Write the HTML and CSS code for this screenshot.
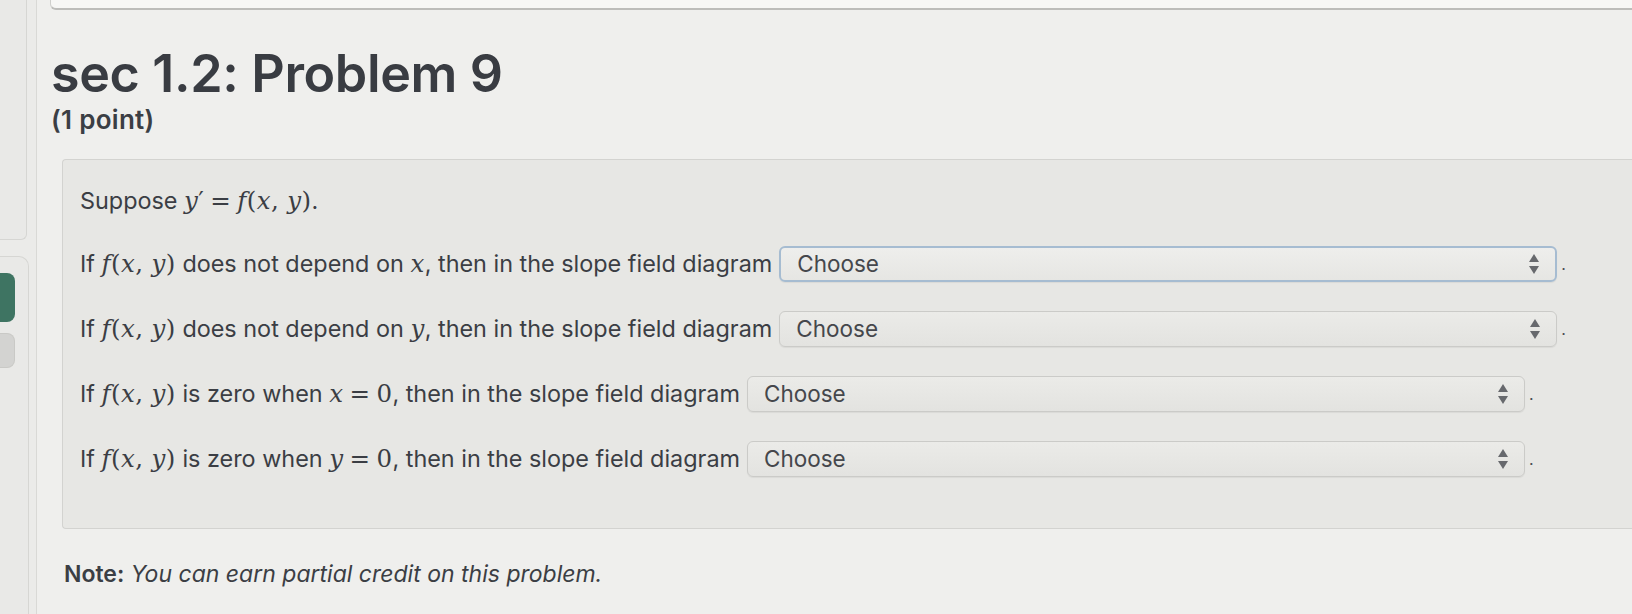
FILE: index.html
```html
<!DOCTYPE html>
<html lang="en">
<head>
<meta charset="utf-8">
<title>sec 1.2: Problem 9</title>
<link rel="stylesheet" href="styles.css">
</head>
<body>
<div class="page">
  <aside class="sidebar">
    <div class="side-panel side-top"></div>
    <div class="side-panel side-lower">
      <div class="side-btn side-green"></div>
      <div class="side-btn side-gray"></div>
    </div>
  </aside>
  <main class="main">
    <div class="top-card"></div>
    <h1 class="title">sec 1.2: Problem 9</h1>
    <div class="points">(1 point)</div>
    <section class="problem">
      <p class="line intro">Suppose <span class="math"><i>y</i>′<span class="op">=</span><i>f</i>(<i>x</i>, <i>y</i>)</span>.</p>
      <div class="row">
        <span class="q">If <span class="math"><i>f</i>(<i>x</i>, <i>y</i>)</span> does not depend on <span class="math"><i>x</i></span>, then in the slope field diagram</span>
        <div class="select focused"><span class="sel-text">Choose</span><svg class="arrows" width="12" height="22" viewBox="0 0 12 22"><path d="M6 1 L11 9 L1 9 Z"/><path d="M1 13 L11 13 L6 21 Z"/></svg></div><span class="dot">.</span>
      </div>
      <div class="row">
        <span class="q">If <span class="math"><i>f</i>(<i>x</i>, <i>y</i>)</span> does not depend on <span class="math"><i>y</i></span>, then in the slope field diagram</span>
        <div class="select"><span class="sel-text">Choose</span><svg class="arrows" width="12" height="22" viewBox="0 0 12 22"><path d="M6 1 L11 9 L1 9 Z"/><path d="M1 13 L11 13 L6 21 Z"/></svg></div><span class="dot">.</span>
      </div>
      <div class="row">
        <span class="q">If <span class="math"><i>f</i>(<i>x</i>, <i>y</i>)</span> is zero when <span class="math"><i>x</i><span class="op">=</span>0</span>, then in the slope field diagram</span>
        <div class="select"><span class="sel-text">Choose</span><svg class="arrows" width="12" height="22" viewBox="0 0 12 22"><path d="M6 1 L11 9 L1 9 Z"/><path d="M1 13 L11 13 L6 21 Z"/></svg></div><span class="dot">.</span>
      </div>
      <div class="row">
        <span class="q">If <span class="math"><i>f</i>(<i>x</i>, <i>y</i>)</span> is zero when <span class="math"><i>y</i><span class="op">=</span>0</span>, then in the slope field diagram</span>
        <div class="select"><span class="sel-text">Choose</span><svg class="arrows" width="12" height="22" viewBox="0 0 12 22"><path d="M6 1 L11 9 L1 9 Z"/><path d="M1 13 L11 13 L6 21 Z"/></svg></div><span class="dot">.</span>
      </div>
    </section>
    <p class="note"><b>Note:</b> <i>You can earn partial credit on this problem.</i></p>
  </main>
</div>
</body>
</html>
```

FILE: styles.css
```css
* { box-sizing: border-box; }

html, body {
  margin: 0;
  padding: 0;
  height: 100%;
  overflow: hidden;
  background: #efefed;
}

body {
  font-family: Inter, "Liberation Sans", Arial, sans-serif;
  color: #3b3e44;
}

.page {
  display: flex;
  height: 614px;
}

.sidebar {
  width: 37px;
  flex: none;
  background: #ebebe9;
  border-right: 1px solid #d9d9d6;
  display: flex;
  flex-direction: column;
}

.side-panel {
  background: #e9e9e7;
  border: 1px solid #d6d6d3;
  border-left: none;
}

.side-top {
  width: 27px;
  height: 240px;
  border-top: none;
  border-bottom-right-radius: 6px;
}

.side-lower {
  width: 29px;
  margin-top: 16px;
  flex: 1;
  border-bottom: none;
  border-top-right-radius: 10px;
  padding-top: 16px;
  display: flex;
  flex-direction: column;
  gap: 11px;
}

.side-btn {
  width: 15px;
  border-radius: 0 8px 8px 0;
}

.side-green {
  height: 49px;
  background: #3e7462;
}

.side-gray {
  height: 35px;
  background: #d3d3d1;
  border: 1px solid #c9c9c6;
  border-left: none;
}

.main {
  flex: 1;
  padding-left: 13px;
  display: flex;
  flex-direction: column;
  min-width: 0;
}

.top-card {
  height: 10px;
  background: #f7f7f5;
  border: 1px solid #cfcfcc;
  border-top: none;
  border-right: none;
  border-bottom: 2px solid #bdbdba;
  border-bottom-left-radius: 6px;
  flex: none;
}

.title {
  margin: 34px 0 0 1px;
  font-size: 52px;
  line-height: 60px;
  font-weight: 600;
  color: #393c42;
  letter-spacing: -0.35px;
}

.points {
  margin-top: 1px;
  margin-left: 1px;
  font-size: 26px;
  line-height: 30px;
  font-weight: 600;
  color: #3b3e44;
  letter-spacing: 0.3px;
}

.problem {
  margin: 24px 0 0 12px;
  height: 370px;
  background: #e7e7e4;
  border: 1px solid #d3d3d0;
  border-right: none;
  border-radius: 4px 0 0 4px;
  padding: 23px 0 0 17px;
  display: flex;
  flex-direction: column;
  gap: 29px;
  flex: none;
}

.line, .row {
  margin: 0;
  font-size: 23.4px;
  line-height: 36px;
  white-space: nowrap;
}

.intro {
  margin-bottom: -2px;
}

.row {
  display: flex;
  align-items: center;
}

.math {
  font-family: "DejaVu Serif", "Liberation Serif", serif;
  font-size: 24.5px;
  letter-spacing: 0.4px;
}

.math i {
  font-style: italic;
}

.op {
  margin: 0 6px;
}

.q {
  margin-right: 7px;
}

.select {
  width: 778px;
  height: 36px;
  display: flex;
  align-items: center;
  justify-content: space-between;
  padding: 0 15px 0 16px;
  background: linear-gradient(#ebebe8, #e3e3e0);
  border: 1px solid #cbcbc8;
  border-radius: 6px;
  box-shadow: 0 1px 1px rgba(0, 0, 0, 0.06);
}

.select.focused {
  border: 2px solid #a6bcd1;
  background: linear-gradient(#eeeeec, #e6e6e3);
}

.sel-text {
  font-size: 22.5px;
  color: #45474c;
}

.arrows path {
  fill: #67696d;
}

.dot {
  font-size: 16px;
  margin-left: 4px;
  color: #4a4c50;
  align-self: center;
}

.note {
  margin: 30px 0 0 14px;
  font-size: 23px;
  line-height: 30px;
  color: #3b3e44;
}

.note b { font-weight: 600; }
.note i { font-style: italic; }
```
